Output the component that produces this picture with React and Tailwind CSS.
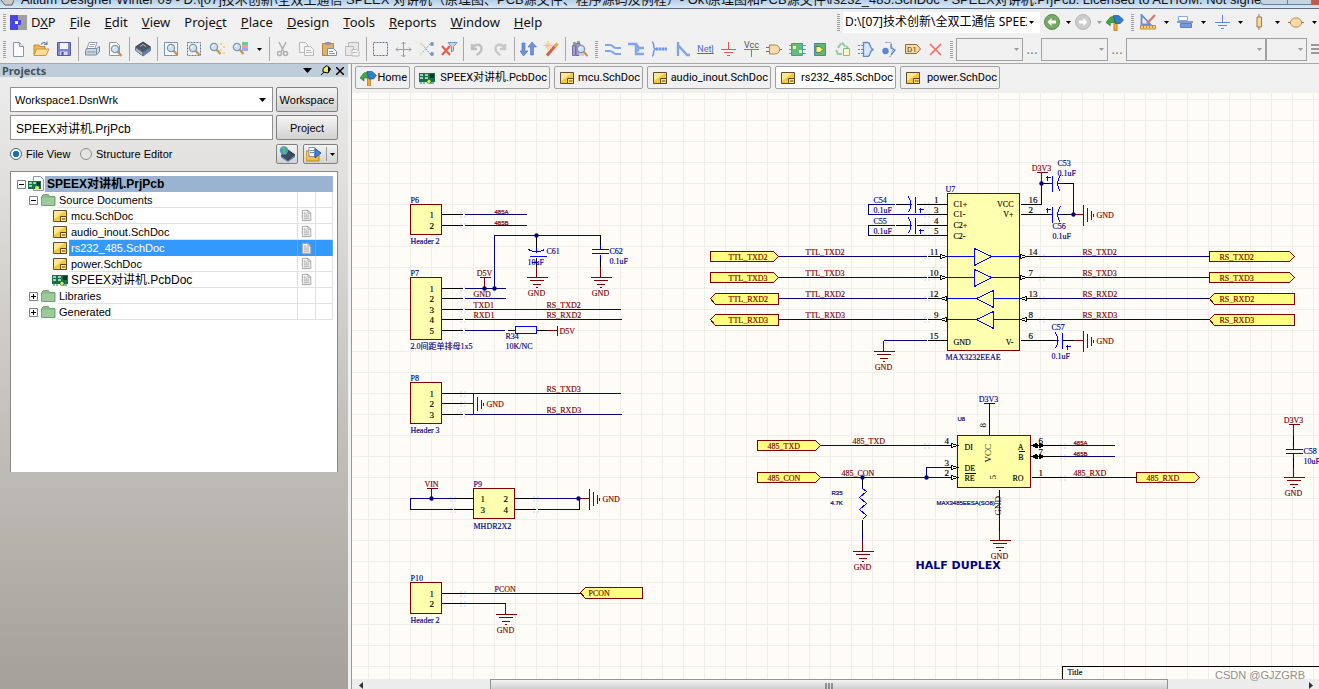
import React from "react";

const RED = "#800000";
const NAVY = "#000080";
const BLUE = "#0000ff";
const BLACK = "#000000";

/* ---------- toolbar icons, 16 x 16 ---------- */

const Lens = ({ x = 7, y = 7 }) => (
  <g>
    <path d={`M${x + 2} ${y + 2}l4.5 5`} stroke="#c98f50" strokeWidth="2.2" />
    <circle cx={x} cy={y} r="3.6" fill="#cfe3f5" stroke="#8296ab" strokeWidth="1.3" />
    <path d={`M${x - 2} ${y}a2 2 0 0 1 2-2`} stroke="#fff" fill="none" />
  </g>
);

const icons = {
  newDoc: (
    <g>
      <path d="M3.5 1.5h6l4 4v10h-10z" fill="#f8fbff" stroke="#8a97a8" />
      <path d="M9.5 1.5v4h4" fill="#dbe5f0" stroke="#8a97a8" />
    </g>
  ),
  open: (
    <g>
      <path d="M1 4h5l1 1.5h5V14H1z" fill="#e9b75c" stroke="#c48a33" />
      <path d="M3.500 8H16l-3 6.500H1z" fill="#fddd92" stroke="#c99744" />
      <path d="M8 3.500c2-2.500 4-2.500 5.500-.5M14 .5v3h-3" fill="none" stroke="#74869c" strokeWidth="1.200" />
    </g>
  ),
  save: (
    <g>
      <path d="M1.500 1.500h13v13h-13z" fill="#7f83d4" stroke="#5458ad" />
      <path d="M4 2h8v6H4z" fill="#f3f4ff" />
      <path d="M4 10.500h7.500V14H4z" fill="#d5d8f5" />
      <path d="M5.500 11h2v3h-2z" fill="#43479a" />
    </g>
  ),
  print: (
    <g>
      <path d="M5 1.500h8l-2 6H3z" fill="#fff" stroke="#8ba0b5" />
      <path d="M2.500 7.500h10l3-2v5l-3 3.500h-11v-4z" fill="#cdd7e3" stroke="#76889c" />
      <path d="M3 11h8.500M12.500 8v5.500" stroke="#7d91a8" fill="none" />
      <path d="M6 3.500h5M5 5.500h5" stroke="#9bb0c8" />
    </g>
  ),
  preview: (
    <g>
      <path d="M2.500 1.500h7l3 3v10h-10z" fill="#fff" stroke="#8a97a8" />
      <Lens x={8} y={8} />
    </g>
  ),
  chip: (
    <g>
      <path d="M8 1l7.500 5L8 11.500.5 6z" fill="#4c5a68" stroke="#303c48" />
      <path d="M.5 6.500v3L8 15v-3.500z" fill="#a9b8c6" stroke="#6c7b89" />
      <path d="M15.500 6.500v3L8 15v-3.500z" fill="#5c84b2" stroke="#5b7593" />
      <path d="M5 5.500l3-2 3 2" stroke="#a6b5c2" fill="none" />
    </g>
  ),
  zoomDoc: (
    <g>
      <path d="M1.500 1.500h13v13h-13z" fill="#f5f9fe" stroke="#7b96b8" />
      <Lens x={8} y={7} />
    </g>
  ),
  zoomArea: (
    <g>
      <path d="M1.500 1.500h13v13h-13z" fill="none" stroke="#5a76a5" strokeDasharray="2 1" />
      <Lens x={7} y={7} />
    </g>
  ),
  zoomPoint: (
    <g>
      <Lens x={5} y={6} />
      <path d="M11 2h2v2h-2zM14 5h2v2h-2zM11 8h2v2h-2zM14 11h2v2h-2z" fill="#e6da76" />
    </g>
  ),
  zoomSel: (
    <g>
      <Lens x={5} y={6} />
      <path d="M10 1h6v3h-6z" fill="#7bc78b" />
      <path d="M10 4h6v3h-6z" fill="#ee9fa3" />
      <path d="M10 7h6v3h-6z" fill="#9fa8ee" />
    </g>
  ),
  cut: (
    <g stroke="#b0b0b0" fill="none" strokeWidth="1.500">
      <path d="M4 1l5 10M11 1L6 11" />
      <circle cx="4.500" cy="12.500" r="2" />
      <circle cx="10.500" cy="12.500" r="2" />
    </g>
  ),
  copy: (
    <g fill="#f4f4f4" stroke="#bababa">
      <path d="M1.500 1.500h6l2 2v8h-8z" />
      <path d="M6.500 5.500h6l3 3v6h-9z" />
      <path d="M8 9.500h5M8 11.500h6" />
    </g>
  ),
  paste: (
    <g>
      <path d="M1.500 2.500h11v12h-11z" fill="#e2b25e" stroke="#b58332" />
      <path d="M4.500 1h5v3h-5z" fill="#8c98a8" />
      <path d="M6.500 7.500h6l3 3v4h-9z" fill="#fff" stroke="#7c8da6" />
      <path d="M8 10.500h4M8 12.500h6" stroke="#8ba0c0" />
    </g>
  ),
  pasteArray: (
    <g fill="#e8e8e8" stroke="#b8b8b8">
      <path d="M4.500 1.500h10v9h-10z" />
      <path d="M1.500 5.500h8v9h-8z" />
      <path d="M8 8.500h5l2 2v4.500H8z" fill="#f6f6f6" />
      <path d="M9 11.500h4" />
    </g>
  ),
  select: <path d="M1.500 1.500h14v13h-14z" fill="none" stroke="#5870a0" strokeDasharray="2 1" />,
  move: (
    <g stroke="#9c9c9c" fill="none">
      <path d="M8.500 1v15M1 8.500h15M6.500 3l2-2 2 2M6.500 14l2 2 2-2M3 6.500l-2 2 2 2M14 6.500l2 2-2 2" />
    </g>
  ),
  deselect: (
    <g>
      <path d="M4 3l8 10M12 3L4 12" stroke="#8da0c4" strokeDasharray="2 1" />
      <circle cx="3" cy="3" r="1.700" fill="#ebe7a8" />
      <circle cx="3" cy="13" r="1.700" fill="#ebe7a8" />
      <circle cx="14" cy="3" r="1.900" fill="#7d92c0" />
      <circle cx="14" cy="13" r="1.900" fill="#7d92c0" />
    </g>
  ),
  clear: (
    <g>
      <path d="M7 1.500h9l-3.500 4v4l-2 1.500V5.500z" fill="#c6d7ea" stroke="#7b94b4" />
      <path d="M1 5l8 9M9 5l-8 9" stroke="#e4604c" strokeWidth="2.200" />
    </g>
  ),
  undo: <path d="M3 3v5h5M3.500 7.500C6 2 13 3 12.500 8c-.3 3-2 4.500-5 6" fill="none" stroke="#c0c0c0" strokeWidth="2.500" />,
  redo: <path d="M13 3v5H8M12.500 7.500C10 2 3 3 3.500 8c.3 3 2 4.500 5 6" fill="none" stroke="#c8c8c8" strokeWidth="2.500" />,
  updown: (
    <g fill="#6c93dc" stroke="#4c71ba" strokeWidth=".6">
      <path d="M2 2h3v8h3l-4.500 5L0 10h2z" />
      <path d="M10.500 14h3V6h3L12 1 8 6h2.500z" />
    </g>
  ),
  wand: (
    <g>
      <path d="M12.500 4.500L4 14.500" stroke="#d0614b" strokeWidth="3" />
      <path d="M14.500 2.500l-3 3.500" stroke="#f4a25f" strokeWidth="3" />
      <path d="M5 0v9M.5 4.500h9M2 1.500l6 6M8 1.500l-6 6" stroke="#efc95a" />
    </g>
  ),
  browse: (
    <g>
      <path d="M1.500 4.500h3v10h-3zM5 2.500h4v12H5z" fill="#a99fcd" stroke="#786ca6" />
      <path d="M2 1h3v3H2zM6 0h3v2H6z" fill="#82ac82" />
      <path d="M8 7h5v8H8z" fill="#d0cbe4" />
      <Lens x={10} y={8} />
    </g>
  ),
  wire: <path d="M0 4h5c3 0 3 3 6 3h5M0 10h5c3 0 3 3 6 3h5" fill="none" stroke="#80a5e8" strokeWidth="2.200" />,
  bus: <path d="M0 3h8v10h8M8 3l3 4h5M8 8l3 2" fill="none" stroke="#80a5e8" strokeWidth="2.400" />,
  harness: (
    <g fill="none" stroke="#6e97e4">
      <path d="M1 1c3 0 0 7 4 7-4 0-1 7-4 7" strokeWidth="1.500" />
      <path d="M5 8h11" strokeWidth="3" strokeDasharray="2.500 .5" />
    </g>
  ),
  entry: <path d="M4 1v14M4 4l9 10h3" fill="none" stroke="#82a4e5" strokeWidth="2.400" />,
  gnd: (
    <g stroke="#e4564c" fill="none">
      <path d="M8.500 1v7M1 8.500h15M4 11.500h9M7 14.500h3" />
    </g>
  ),
  gate: (
    <g>
      <path d="M0 6.500h4M0 10.500h4M12 8.500h4" stroke="#7c6f58" />
      <path d="M3.500 4h5c7 0 7 9 0 9h-5z" fill="#f8dcae" stroke="#a78450" />
    </g>
  ),
  sheet: (
    <g>
      <path d="M0 4.500h3M0 8.500h3M0 12.500h3M14 4.500h3M14 8.500h3M14 12.500h3" stroke="#6f93c4" />
      <path d="M2.500 2.500h11v12h-11z" fill="#62ba7c" stroke="#4696b0" />
      <path d="M4 5h3v3H4zM10 9h3v3h-3z" fill="#fff17d" />
    </g>
  ),
  entryBox: (
    <g>
      <path d="M2.500 2.500h11v12h-11z" fill="#5fb67b" stroke="#4b83b0" />
      <path d="M4 5.500h4l3 3-3 3H4z" fill="#fff07a" stroke="#6b7740" />
    </g>
  ),
  device: (
    <g>
      <path d="M7 1.500l3 4M6 2.500L3 7M1 9l2 4h4M11 5l2 2" stroke="#8fcb9d" strokeWidth="2" fill="none" />
      <path d="M8.500 7.500h6v7h-6z" fill="#fff9c4" stroke="#7ebc8d" />
    </g>
  ),
  harnessBox: (
    <g>
      <path d="M5.500 1.500h4c4 0 1 6 6 7-5 1-2 7-6 7h-4z" fill="#d8e6fa" stroke="#628acb" strokeWidth="1.300" />
      <path d="M0 4.500h6M0 8.500h6M0 12.500h6" stroke="#628acb" strokeDasharray="2 1" />
    </g>
  ),
  harnessEntry: (
    <g>
      <path d="M4.500 1.500h4c4 0 0 6 5 7-5 1-1 7-5 7" fill="none" stroke="#628acb" strokeDasharray="2 1" />
      <path d="M10 3v4l4 2-4 5" fill="none" stroke="#628acb" strokeWidth="1.300" />
      <circle cx="4.500" cy="10" r="3.200" fill="#5b86d8" />
    </g>
  ),
  cross: <path d="M3 3l11 11M14 3L3 14" stroke="#f06a60" strokeWidth="1.600" />,
  back: (
    <g>
      <circle cx="8" cy="8" r="7.500" fill="#75a964" stroke="#5a8a4e" />
      <path d="M3.500 8l4-4v2.500H12v3H7.500V12z" fill="#fff" />
    </g>
  ),
  forward: (
    <g>
      <circle cx="8" cy="8" r="7.500" fill="#cccccc" stroke="#b7b7b7" />
      <path d="M12.500 8l-4-4v2.500H4v3h4.500V12z" fill="#fff" />
    </g>
  ),
  home: (
    <g>
      <path d="M7.500 7h3v9h-3z" fill="#f5a933" stroke="#a36518" strokeWidth=".6" />
      <path d="M0 8l4-5 4-1v6H4v3z" fill="#42a846" stroke="#207025" strokeWidth=".6" />
      <path d="M7 1.500h5l4.500 4-3 3.500H9z" fill="#2f7fd0" stroke="#18457c" strokeWidth=".6" />
    </g>
  ),
  ruler: (
    <g>
      <path d="M1.500 1v9.500h9z" fill="none" stroke="#6a8cd0" strokeWidth="1.800" />
      <path d="M15 1L7 9.500" stroke="#cc7e73" strokeWidth="2.400" />
      <path d="M.5 11.500h15v3.500H.5z" fill="#f6cf86" stroke="#bb8c3e" />
      <path d="M3.500 12v2M6.500 12v2M9.500 12v2M12.500 12v2" stroke="#bb8c3e" />
    </g>
  ),
  align: (
    <g>
      <path d="M1.500 2.500h9v4h-9z" fill="#fff" stroke="#8ba8d8" />
      <path d="M0 8h16" stroke="#5c80c0" strokeWidth="1.500" />
      <path d="M3.500 9.500h11v4h-11z" fill="#7799dc" stroke="#5c80c0" />
    </g>
  ),
  gndBlue: <path d="M8.500 1v7M1 8.500h15M4 11.500h9M7 14.500h3" stroke="#5c87dc" fill="none" />,
  resistor: (
    <g>
      <path d="M8 0v16" stroke="#86764e" />
      <path d="M6 3h4.500v10H6z" fill="#f8d9a0" stroke="#9c7d42" />
    </g>
  ),
  node: (
    <g>
      <path d="M0 8.500h16" stroke="#8b7b62" />
      <path d="M5.500 4h5l3 3v3l-3 3h-5l-3-3V7z" fill="#fbd9a4" stroke="#b58c4c" />
    </g>
  ),
  sch: (
    <g>
      <path d="M1.500 2.500h13v11h-13z" fill="#f9c838" stroke="#5b5037" />
      <path d="M2 3h11L2 11z" fill="#fde78f" />
      <path d="M8.500 8.500h6v5h-6z" fill="#ffe27a" stroke="#5b4816" />
      <path d="M10 11h3.500" stroke="#5b4816" />
    </g>
  ),
  pcb: (
    <g>
      <path d="M0 3h16v9H0z" fill="#18714d" />
      <path d="M1 4h3v2H1zM1 7h3v2H1zM6 4h3v2H6zM6 7h3v2H6z" fill="#a1d0af" />
      <path d="M11 4h4v4h-4z" fill="#0d3825" />
      <circle cx="10" cy="11.500" r="2" fill="#dff05a" stroke="#1b5f20" strokeWidth=".6" />
      <path d="M2 12v2M5 12v2M12 12v2M14 12v2" stroke="#18714d" />
    </g>
  ),
  project: (
    <g>
      <path d="M5.500.5h7l3 3v11h-10z" fill="#fff" stroke="#8e9bac" />
      <path d="M0 5h13v8H0z" fill="#18714d" />
      <path d="M1 6h3v2H1zM1 9h3v2H1zM5 6h3v2H5z" fill="#a1d0af" />
      <path d="M9 6h3v4H9z" fill="#0d3825" />
      <circle cx="9" cy="12" r="2" fill="#dff05a" />
    </g>
  ),
  folder: (
    <g>
      <path d="M1.500 4.500l2-2h5l1 2h5.500v9h-13.500z" fill="#88bd87" stroke="#70a571" />
      <path d="M2 6h12v7H2z" fill="#9ecb9b" />
    </g>
  ),
  page: (
    <g>
      <path d="M3.500 2.500h6l3 3v8h-9z" fill="#fafafa" stroke="#a0a0a0" />
      <path d="M9.500 2.500v3h3M5 5.500h3M5 7.500h6M5 9.500h6M5 11.500h6" stroke="#a0a0a0" fill="none" />
    </g>
  ),
  folderArrow: (
    <g>
      <path d="M0 5h5l1 2h7v8H0z" fill="#f3bf49" stroke="#b98622" />
      <path d="M3 1.500h6v9H3z" fill="#fff" stroke="#8b99b0" />
      <path d="M4 4.500h4M4 6.500h4" stroke="#6d87b5" />
      <path d="M9 2.500l6 4.500-6 5z" fill="#4382d8" stroke="#2559a4" />
    </g>
  ),
  chipGlobe: (
    <g>
      <path d="M9 4l7 5-7 5.500-7-5z" fill="#3e4c5a" stroke="#26313c" />
      <path d="M2 9.500v2l7 4.500 7-5v-2l-7 5.500z" fill="#5382b7" />
      <circle cx="5" cy="4.500" r="4.200" fill="#4b94cf" />
      <path d="M2 2c3-2 4 1 3 3s2 2 1 3" stroke="#5ec05d" strokeWidth="2" fill="none" />
    </g>
  ),
};

const Icon = ({ name, className = "h-4 w-[17px]" }) => (
  <svg viewBox="0 0 17 16" className={`shrink-0 ${className}`} fill="none" aria-hidden="true">
    {icons[name]}
  </svg>
);

const Down = ({ color = "#000", className = "h-1 w-[7px]" }) => (
  <svg viewBox="0 0 7 4" preserveAspectRatio="none" className={`shrink-0 ${className}`} aria-hidden="true">
    <path d="M0 0h7L3.500 4z" fill={color} />
  </svg>
);

const Grip = ({ className = "mx-[3px]" }) => (
  <svg viewBox="0 0 3 17" className={`h-[17px] w-[3px] shrink-0 ${className}`} aria-hidden="true">
    <path d="M1.500 0v17" stroke="#a0a0a0" strokeWidth="3" strokeDasharray="1 1" />
  </svg>
);

const Sep = () => (
  <span className="flex h-6 w-[5px] shrink-0 justify-center">
    <span className="w-px bg-[#a6a6a6]" />
  </span>
);

const Tool = ({ name, label }) => (
  <button type="button" aria-label={label || name} className="flex h-6 w-[23px] shrink-0 items-center justify-center">
    <Icon name={name} />
  </button>
);

const MENU = [
  ["D", "X", "P"], ["", "F", "ile"], ["", "E", "dit"], ["", "V", "iew"], ["Proje", "c", "t"],
  ["", "P", "lace"], ["", "D", "esign"], ["", "T", "ools"], ["", "R", "eports"], ["", "W", "indow"], ["", "H", "elp"],
];

function TitleBar() {
  return (
    <header className="flex h-[9px] shrink-0 items-end overflow-hidden border-b border-[#5b6f86] bg-linear-to-b from-[#b4cfe8] to-[#dbe8f3] font-['Liberation_Sans','Noto_Sans_CJK_SC',sans-serif] text-[13px] leading-4">
      <svg viewBox="0 0 14 8" className="h-2 w-[14px] shrink-0" aria-hidden="true">
        <path d="M1 0l4 5h7l2-5" fill="#c9c9c9" stroke="#666" />
      </svg>
      <span className="ml-[7px] min-w-0 flex-1 whitespace-nowrap text-[#111]">
        Altium Designer Winter 09 - D:\[07]技术创新\全双工通信 SPEEX 对讲机（原理图、PCB源文件、程序源码及例程）- Ok\原理图和PCB源文件\rs232_485.SchDoc - SPEEX对讲机.PrjPcb. Licensed to ALTIUM. Not signed in.
      </span>
      <span className="flex h-2 items-start">
        <button type="button" aria-label="Minimize" className="h-[5px] w-7 rounded-bl border border-t-0 border-[#6d7f93] bg-[#c5d4e3]" />
        <button type="button" aria-label="Restore" className="h-[5px] w-6 border-r border-b border-[#6d7f93] bg-[#c5d4e3]" />
        <button type="button" aria-label="Close" className="h-[5px] w-[7px] bg-[#c65a47]" />
      </span>
    </header>
  );
}

function MenuBar() {
  return (
    <div className="flex h-[26px] shrink-0 items-center overflow-hidden">
      <Grip className="ml-[3px]" />
      <svg viewBox="0 0 17 15" className="ml-1 h-[15px] w-[17px] shrink-0" aria-hidden="true">
        <path d="M0 0h8v15H0z" fill="#4848dc" />
        <path d="M8 0h9v15H8z" fill="#a0a0a0" />
        <path d="M7 5h4v5H7z" fill="#4848dc" />
        <path d="M5 6h3v3H5z" fill="#fff" />
      </svg>
      <nav className="flex flex-1 gap-[14px] pl-1 font-['Noto_Sans',sans-serif] text-[13px] leading-5 text-[#111]">
        {MENU.map(([a, b, c]) => (
          <button type="button" key={a + b + c}>{a}<u>{b}</u>{c}</button>
        ))}
      </nav>
      <Grip />
      <div className="flex h-[21px] w-[197px] shrink-0 items-center bg-white pr-1">
        <input aria-label="Document path" defaultValue="D:\[07]技术创新\全双工通信 SPEEX 对讲机" className="w-[184px] bg-transparent pl-[2px] font-['Noto_Sans','Noto_Sans_CJK_SC',sans-serif] text-[12px] leading-5 outline-none" />
        <button type="button" aria-label="Path history" className="flex flex-1 justify-center"><Down className="h-[3px] w-[5px]" /></button>
      </div>
      {["back", "forward"].map((n) => (
        <button type="button" aria-label={n} key={n} className="flex w-[31px] shrink-0 items-center gap-[5px] pl-1">
          <Icon name={n} />
          <Down color={n === "back" ? "#000" : "#999"} className="h-[3px] w-[5px]" />
        </button>
      ))}
      <button type="button" aria-label="Home" className="flex w-[26px] shrink-0 justify-center"><Icon name="home" className="h-[17px] w-[18px]" /></button>
      <Grip />
      <div className="flex w-[182px] shrink-0">
        {["ruler", "align", "gndBlue", "resistor", "node"].map((n) => (
          <button type="button" aria-label={n} key={n} className="flex w-[37px] shrink-0 items-center gap-[7px] pl-[3px]">
            <Icon name={n} />
            <Down className="h-[3px] w-[5px]" />
          </button>
        ))}
      </div>
    </div>
  );
}

const GreySelect = ({ label, className }) => (
  <span className={`relative flex h-[23px] items-center ${className}`}>
    <select aria-label={label} disabled className="h-full w-full appearance-none border border-[#a0a0a0] bg-[#f0f0f0]" />
    <span className="absolute right-1"><Down color="#9a9a9a" className="h-[3px] w-[5px]" /></span>
  </span>
);

function ToolBar() {
  return (
    <div className="flex h-[28px] shrink-0 items-center overflow-hidden">
      <Grip className="mr-px ml-[3px]" />
      <Tool name="newDoc" /><Tool name="open" /><Tool name="save" /><Sep />
      <Tool name="print" /><Tool name="preview" /><Sep />
      <Tool name="chip" /><Sep />
      <Tool name="zoomDoc" /><Tool name="zoomArea" /><Tool name="zoomPoint" /><Tool name="zoomSel" />
      <button type="button" aria-label="More zoom" className="flex w-[15px] shrink-0 justify-center"><Down className="h-[3px] w-[5px]" /></button>
      <Sep />
      <Tool name="cut" /><Tool name="copy" /><Tool name="paste" /><Tool name="pasteArray" /><Sep />
      <Tool name="select" /><Tool name="move" /><Tool name="deselect" /><Tool name="clear" /><Sep />
      <Tool name="undo" /><Tool name="redo" /><Sep />
      <Tool name="updown" /><Tool name="wand" /><Sep />
      <Tool name="browse" /><Grip className="mx-1" />
      <Tool name="wire" /><Tool name="bus" /><Tool name="harness" /><Tool name="entry" />
      <button type="button" className="w-[23px] shrink-0 text-center font-['Roboto',sans-serif] text-[9px] leading-[10px] text-[#4a6cb8] underline">Net]</button>
      <Tool name="gnd" />
      <button type="button" className="flex w-[23px] shrink-0 flex-col items-center font-['Roboto',sans-serif] text-[9px] leading-[8px] text-[#555]">
        Vcc
        <svg viewBox="0 0 15 8" className="h-2 w-[15px]" aria-hidden="true"><path d="M0 .5h15M7.500 0v8" stroke="#e4564c" /></svg>
      </button>
      <Tool name="gate" /><Tool name="sheet" /><Tool name="entryBox" /><Tool name="device" /><Tool name="harnessBox" /><Tool name="harnessEntry" />
      <button type="button" aria-label="Port D1" className="flex w-[23px] shrink-0 justify-center">
        <svg viewBox="0 0 16 10" className="h-[10px] w-4" aria-hidden="true">
          <path d="M.5.5h11l4 4.500-4 4.500H.5z" fill="#fbdba3" stroke="#8c6e3c" />
          <text x="2" y="8" fontSize="8" fill="#4d3c1e" fontFamily="Roboto, sans-serif">D1</text>
        </svg>
      </button>
      <Tool name="cross" /><Grip className="mx-[3px]" />
      <div className="flex min-w-0 flex-1 items-center text-[#777]">
        <GreySelect label="Filter" className="w-[67px] shrink-0" />
        <span className="w-[18px] shrink-0 text-center font-['Liberation_Sans',sans-serif] text-[14px] leading-5">...</span>
        <GreySelect label="Mask" className="w-[67px] shrink-0" />
        <span className="w-[18px] shrink-0 text-center font-['Liberation_Sans',sans-serif] text-[14px] leading-5">...</span>
        <GreySelect label="Font" className="w-[140px] shrink-0" />
        <GreySelect label="Size" className="w-[41px] shrink-0" />
        <svg viewBox="0 0 8 10" className="ml-1 h-[10px] w-2 shrink-0" aria-hidden="true"><path d="M0 1h8M0 5h8M0 9h8" stroke="#999" strokeWidth="2" /></svg>
      </div>
    </div>
  );
}

/* ---------- projects panel ---------- */

const TREE = [
  { level: 0, open: true, icon: "project", text: "SPEEX对讲机.PrjPcb", size: "text-[12px]" },
  { level: 1, open: true, icon: "folder", text: "Source Documents" },
  { level: 2, icon: "sch", text: "mcu.SchDoc", page: true },
  { level: 2, icon: "sch", text: "audio_inout.SchDoc", page: true },
  { level: 2, icon: "sch", text: "rs232_485.SchDoc", page: true, active: true },
  { level: 2, icon: "sch", text: "power.SchDoc", page: true },
  { level: 2, icon: "pcb", text: "SPEEX对讲机.PcbDoc", page: true, size: "text-[12px]" },
  { level: 1, open: false, icon: "folder", text: "Libraries" },
  { level: 1, open: false, icon: "folder", text: "Generated" },
];

const INDENT = ["pl-[6px]", "pl-[18px]", "pl-[41px]"];

function TreeRow({ level, open, icon, text, page, active, size = "text-[11px]" }) {
  const root = level === 0;
  const tone = root ? "bg-[#9ab3d1] font-bold" : active ? "bg-[#3399ff] text-white" : "border-b border-[#e0e0e0]";
  const cell = active ? "border-[#5aacff]" : "border-[#e0e0e0]";
  return (
    <li className={`flex h-4 items-center ${INDENT[level]}`}>
      {level < 2 && (
        <button type="button" aria-label={open ? "Collapse" : "Expand"} className="mr-[2px] flex h-[9px] w-[9px] shrink-0">
          <svg viewBox="0 0 9 9" className="h-[9px] w-[9px]" aria-hidden="true">
            <path d="M.5.5h8v8h-8z" fill="#fff" stroke="#808080" />
            <path d={open ? "M2 4.500h5" : "M2 4.500h5M4.500 2v5"} stroke="#000" />
          </svg>
        </button>
      )}
      <Icon name={icon} />
      <span className={`flex h-4 min-w-0 flex-1 items-center pl-[2px] whitespace-nowrap ${size} ${tone}`}>
        <span className="flex-1">{text}</span>
        {!root && (
          <>
            <span className={`flex h-4 w-[18px] items-center justify-center border-l ${cell}`}>{page && <Icon name="page" className="h-[15px] w-4" />}</span>
            <span className={`h-4 w-[18px] border-x ${cell}`} />
          </>
        )}
      </span>
    </li>
  );
}

const panelButton = "border border-[#808080] rounded-[2px] bg-linear-to-b from-[#f4f4f4] to-[#d2d2d2] flex items-center justify-center";
const radio = "h-3 w-3 appearance-none rounded-full border border-[#8e8f8f] bg-[#e4e4e4] checked:border-[#4b6a86] checked:bg-[radial-gradient(circle,#1c6fae_40%,#f0f6fa_50%)]";

function ProjectsPanel() {
  return (
    <aside className="flex w-[348px] shrink-0 flex-col bg-linear-to-b from-[#eeeeee] to-[#a5a099] font-['Liberation_Sans','Noto_Sans_CJK_SC',sans-serif] text-[11px] leading-4 text-black">
      <div className="flex h-[13px] shrink-0 items-center bg-[#bfcddb] pr-1 pl-[2px]">
        <h2 className="flex-1 font-['Noto_Sans',sans-serif] text-[11px] leading-[13px] font-bold text-[#44525f]">Projects</h2>
        <button type="button" aria-label="Panel menu" className="mr-2"><Down className="h-[5px] w-[9px]" /></button>
        <button type="button" aria-label="Pin panel" className="mr-[5px]">
          <svg viewBox="0 0 11 11" className="h-[11px] w-[11px]" aria-hidden="true">
            <path d="M1 10l3-3" stroke="#000" />
            <path d="M3 3.500l4-3 3.500 3.500-2.500 4-5-1z" fill="#f4e84a" stroke="#000" />
            <path d="M8 1l2.500 3-2.500 4" fill="#000" />
            <path d="M5 5l2-2" stroke="#fff" />
          </svg>
        </button>
        <button type="button" aria-label="Close panel">
          <svg viewBox="0 0 8 8" className="h-2 w-2" aria-hidden="true"><path d="M0 0l8 8M8 0L0 8" stroke="#000" strokeWidth="1.500" /></svg>
        </button>
      </div>
      <div className="flex flex-col px-[10px] pt-[10px]">
        <div className="flex gap-[3px]">
          <div className="relative flex h-[25px] flex-1 items-center">
            <select aria-label="Workspace" className="h-full w-full appearance-none border border-[#909090] bg-white pl-1 outline-none">
              <option>Workspace1.DsnWrk</option>
            </select>
            <span className="absolute right-[7px]"><Down /></span>
          </div>
          <button type="button" className={`${panelButton} w-[62px]`}>Workspace</button>
        </div>
        <div className="mt-[3px] flex gap-[3px]">
          <input aria-label="Project file" defaultValue="SPEEX对讲机.PrjPcb" className="h-[25px] min-w-0 flex-1 border border-[#909090] bg-white pl-[5px] text-[12px] outline-none" />
          <button type="button" className={`${panelButton} w-[62px]`}>Project</button>
        </div>
        <div className="mt-1 flex h-5 items-center">
          <label className="flex w-[70px] items-center gap-1 whitespace-nowrap"><input type="radio" name="view" defaultChecked className={radio} />File View</label>
          <label className="flex flex-1 items-center gap-1 whitespace-nowrap"><input type="radio" name="view" className={radio} />Structure Editor</label>
          <button type="button" aria-label="Compile" className={`${panelButton} mr-[5px] h-5 w-[22px]`}><Icon name="chipGlobe" /></button>
          <button type="button" aria-label="Options" className={`${panelButton} h-5 w-[35px] gap-[3px]`}>
            <Icon name="folderArrow" />
            <span className="h-[14px] w-px bg-[#999]" />
            <Down className="h-[3px] w-[5px]" />
          </button>
        </div>
        <ul className="mt-[7px] h-[301px] border-t border-r border-l border-[#888888] bg-white pt-[4px] pr-1">
          {TREE.map((row) => <TreeRow key={row.text} {...row} />)}
        </ul>
      </div>
    </aside>
  );
}

/* ---------- schematic primitives ---------- */

const W = ({ d, c = NAVY }) => <path d={d} stroke={c} fill="none" />;
const T = ({ x, y, c = RED, s = 8, a = "start", children }) => (
  <text x={x} y={y - 1} fill={c} fontSize={s} textAnchor={a} stroke={c} strokeWidth=".15">{children}</text>
);
const Tiny = ({ x, y, c = NAVY, children }) => (
  <text x={x} y={y - 1} fill={c} fontSize="6" fontFamily="Liberation Sans, sans-serif" stroke={c} strokeWidth=".2">{children}</text>
);
const Dot = ({ x, y }) => <circle cx={x} cy={y} r="2.200" fill={NAVY} shapeRendering="auto" />;
const Spot = ({ x, y }) => (
  <path d={`M${x - 3} ${y - 2}h2M${x + 1} ${y - 2}h2M${x - 3} ${y + 2}h2M${x + 1} ${y + 2}h2`} stroke="#e3ebf6" strokeWidth="2" />
);
const Box = ({ x, y, w, h }) => <path d={`M${x} ${y}h${w}v${h}h${-w}z`} fill="#ffffb0" stroke={RED} />;

const GndDown = ({ x, y }) => (
  <g>
    <W c={RED} d={`M${x - 10} ${y}h21M${x - 7} ${y + 3}h14M${x - 4} ${y + 7}h8M${x - 1} ${y + 10}h2`} />
    <T x={x} y={y + 19} a="middle">GND</T>
  </g>
);
const GndRight = ({ x, y }) => (
  <g>
    <W c={RED} d={`M${x} ${y - 10}v21M${x + 4} ${y - 7}v14M${x + 8} ${y - 4}v9M${x + 10} ${y - 1}v3`} />
    <T x={x + 13} y={y + 4}>GND</T>
  </g>
);
const Power = ({ x, y, h = 11, label, c = RED }) => (
  <g>
    <W c={c} d={`M${x - 5} ${y}h11M${x} ${y}v${h}`} />
    <T x={x} y={y - 1} a="middle" c={c}>{label}</T>
  </g>
);
const Port = ({ x, y, w, left, label, tx }) => (
  <g>
    <path
      d={left ? `M${x} ${y + 5}l5 -5H${x + w}v11H${x + 5}z` : `M${x} ${y}H${x + w - 5}l5 5l-5 5H${x}z`}
      fill="#ffff80" stroke={RED}
    />
    <T x={tx} y={y + 9}>{label}</T>
  </g>
);
const Arrow = ({ x, y, left }) => (
  <path d={left ? `M${x + 6} ${y - 2}v4l-6 -2z` : `M${x} ${y - 2}v4l6 -2z`} fill="#fff" stroke={BLACK} />
);
const Plus = ({ x, y }) => <W c={BLUE} d={`M${x - 2} ${y}h5M${x} ${y - 2}v5`} />;

const Header = ({ x, y, w = 31, h, name, note, pins }) => (
  <g>
    <T x={x} y={y - 1} c={NAVY}>{name}</T>
    <Box x={x} y={y} w={w} h={h} />
    {pins.map((p, i) => (
      <g key={p}>
        <T x={429} y={p + 4} c={BLACK} s={9}>{i + 1}</T>
        <Spot x={462} y={p} />
        <W c={BLACK} d={`M441 ${p}H462`} />
      </g>
    ))}
    <T x={x} y={y + h + 10} c={NAVY}>{note}</T>
  </g>
);

const ROWS = [
  { y: 256, n: "TXD2", l: "11", r: "14" },
  { y: 277, n: "TXD3", l: "10", r: "7" },
  { y: 298, n: "RXD2", l: "12", r: "13", left: true },
  { y: 319, n: "RXD3", l: "9", r: "8", left: true },
];

function LeftConnectors() {
  return (
    <g>
      <Header x={410} y={204} h={30} name="P6" note="Header 2" pins={[214, 225]} />
      <W d="M464 214H526M464 225H526" />
      <Tiny x={494} y={214} c={RED}>485A</Tiny>
      <Tiny x={494} y={225} c={RED}>485B</Tiny>

      <Header x={410} y={277} h={62} name="P7" note="2.0间距单排母1x5" pins={[288, 298, 309, 319, 330]} />
      <W d="M464 288H505M464 298H505M464 309H620M464 319H621M464 330H504M494 288V235H600" />
      <W c={BLACK} d="M507 330H515M536 330H546M536 235V248M536 257V266M600 235V248M600 254V266" />
      <W c={RED} d="M546 330H557M557 325V335M536 266V277M600 266V277" />
      <path d="M515 326h21v7h-21z" fill="none" stroke={BLUE} />
      <W c={BLUE} d="M528 249q8 5 16 0M529 256h17M536 247v5M591 249h17M591 253h17M600 244v5M600 254v4M531 262h6" />
      <Power x={484} y={277} label="D5V" />
      <Dot x={484} y={288} /><Dot x={494} y={288} /><Dot x={536} y={235} />
      <GndDown x={536} y={277} /><GndDown x={600} y={277} />
      <T x={546} y={254} c={NAVY}>C61</T><T x={527} y={265} c={NAVY}>10uF</T>
      <T x={609} y={254} c={NAVY}>C62</T><T x={609} y={264} c={NAVY}>0.1uF</T>
      <T x={473} y={297}>GND</T><T x={473} y={308}>TXD1</T><T x={473} y={318}>RXD1</T>
      <T x={546} y={308}>RS_TXD2</T><T x={546} y={318}>RS_RXD2</T>
      <T x={559} y={334}>D5V</T>
      <T x={505} y={339} c={NAVY}>R34</T><T x={505} y={349} c={NAVY}>10K/NC</T>

      <Header x={410} y={382} h={41} name="P8" note="Header 3" pins={[393, 403, 414]} />
      <W d="M462 393H620M464 414H621" />
      <W c={RED} d="M462 403H473" />
      <GndRight x={473} y={403} />
      <T x={546} y={392}>RS_TXD3</T><T x={546} y={413}>RS_RXD3</T>

      <T x={473} y={487} c={NAVY}>P9</T>
      <Box x={473} y={488} w={41} h={30} />
      <Spot x={452} y={498} /><Spot x={452} y={509} /><Spot x={535} y={498} /><Spot x={535} y={509} />
      <T x={480} y={502} c={BLACK} s={9}>1</T><T x={503} y={502} c={BLACK} s={9}>2</T>
      <T x={480} y={513} c={BLACK} s={9}>3</T><T x={503} y={513} c={BLACK} s={9}>4</T>
      <T x={473} y={529} c={NAVY}>MHDR2X2</T>
      <W d="M453 498H410V509H452M535 498H579V509H537" />
      <W c={BLACK} d="M453 498H473M453 509H473M514 498H535M514 509H535" />
      <W c={RED} d="M579 498H589" />
      <Power x={431} y={488} label="VIN" />
      <Dot x={431} y={498} /><Dot x={578} y={498} />
      <GndRight x={589} y={498} />

      <Header x={410} y={582} h={31} name="P10" note="Header 2" pins={[593, 603]} />
      <W d="M462 593H580M462 603H505" />
      <W c={RED} d="M505 603V614" />
      <GndDown x={505} y={614} />
      <T x={494} y={592}>PCON</T>
      <Port x={580} y={587} w={62} left label="PCON" tx={588} />
    </g>
  );
}

function Max3232() {
  return (
    <g>
      <T x={945} y={192} c={NAVY}>U7</T>
      <Box x={947} y={193} w={72} h={157} />
      <T x={945} y={360} c={NAVY}>MAX3232EEAE</T>
      {[["C1+", 207], ["C1-", 217], ["C2+", 228], ["C2-", 239], ["GND", 345]].map(([t, y]) => <T key={t} x={953} y={y} c={BLACK}>{t}</T>)}
      {[["VCC", 207], ["V+", 217], ["V-", 345]].map(([t, y]) => <T key={t} x={1013} y={y} c={BLACK} a="end">{t}</T>)}
      {[["1", 203], ["3", 213], ["4", 224], ["5", 234], ["15", 339]].map(([t, y]) => <T key={t} x={938} y={y} c={BLACK} s={9} a="end">{t}</T>)}
      {[["16", 203], ["2", 213], ["6", 339]].map(([t, y]) => <T key={t} x={1028} y={y} c={BLACK} s={9}>{t}</T>)}

      {[204, 225].map((y, i) => (
        <g key={y}>
          <Spot x={926} y={y} /><Spot x={926} y={y + 10} />
          <W d={`M894 ${y}H868V${y + 10}H927`} />
          <W c={BLACK} d={`M895 ${y}H907M916 ${y}H947M927 ${y + 10}H947`} />
          <W c={BLUE} d={`M907 ${y}H911M908 ${y - 8}q5 8 0 16M915 ${y - 8}v16`} />
          <Plus x={920} y={y + 5} />
          <T x={873} y={y - 1} c={NAVY}>{i ? "C55" : "C54"}</T>
          <T x={873} y={y + 9} c={NAVY}>0.1uF</T>
        </g>
      ))}

      {ROWS.map(({ y, n, l, r, left }) => (
        <g key={n}>
          <Spot x={926} y={y} /><Spot x={1041} y={y} />
          <Port x={710} y={y - 5} w={68} left={left} label={`TTL_${n}`} tx={728} />
          <Port x={1209} y={y - 5} w={85} left={left} label={`RS_${n}`} tx={1219} />
          <W d={`M778 ${y}H926M1041 ${y}H1209`} />
          <W c={BLACK} d={`M927 ${y}H947M1020 ${y}H1041`} />
          <T x={805} y={y - 1}>{`TTL_${n}`}</T>
          <T x={1082} y={y - 1}>{`RS_${n}`}</T>
          <T x={938} y={y - 1} c={BLACK} s={9} a="end">{l}</T>
          <T x={1028} y={y - 1} c={BLACK} s={9}>{r}</T>
          <Arrow x={940} y={y} left={left} /><Arrow x={1020} y={y} left={left} />
          <W c={BLUE} d={left ? `M947 ${y}H976M993 ${y}H1019M993 ${y - 8}v17l-17 -9z` : `M947 ${y}H974M992 ${y}H1019M974 ${y - 8}v17l17 -9z`} />
        </g>
      ))}

      <Spot x={883} y={340} />
      <W d="M883 340H926" />
      <W c={BLACK} d="M927 340H947" />
      <W c={RED} d="M883 340V351" />
      <GndDown x={883} y={351} />

      <W c={BLACK} d="M1020 204H1041M1041 183H1052M1062 183H1073M1020 214H1052M1058 214H1073M1020 340H1054M1062 340H1073" />
      <W d="M1041 183V204M1073 183V214" />
      <W c={RED} d="M1073 214H1083M1073 340H1083" />
      <W c={BLUE} d="M1048 183H1052M1052 175v16M1060 175q-6 8 0 16M1056 183h6M1048 214H1052M1052 206v16M1060 206q-6 8 0 16M1056 214h4M1054 340h4M1055 332q5 8 0 16M1062 332v16" />
      <Plus x={1047} y={177} /><Plus x={1047} y={209} /><Plus x={1067} y={346} />
      <Power x={1041} y={172} label="D3V3" />
      <Dot x={1041} y={183} /><Dot x={1073} y={214} />
      <GndRight x={1083} y={214} /><GndRight x={1083} y={340} />
      <T x={1057} y={166} c={NAVY}>C53</T><T x={1057} y={176} c={NAVY}>0.1uF</T>
      <T x={1052} y={229} c={NAVY}>C56</T><T x={1052} y={239} c={NAVY}>0.1uF</T>
      <T x={1051} y={330} c={NAVY}>C57</T><T x={1051} y={359} c={NAVY}>0.1uF</T>
    </g>
  );
}

function Max3485() {
  return (
    <g>
      <Port x={757} y={440} w={63} label="485_TXD" tx={767} />
      <Port x={757} y={472} w={63} label="485_CON" tx={767} />
      <Port x={1136} y={472} w={63} label="485_RXD" tx={1146} />
      <Spot x={926} y={445} /><Spot x={1062} y={445} /><Spot x={1062} y={456} /><Spot x={1062} y={477} />
      <W d="M820 445H937M820 477H947M926 477V467H945M1062 445H1114M1062 456H1114M1062 477H1136M862 519V540M989 403V435M999 489V530" />
      <W c={BLACK} d="M937 445H957M944 477H957M945 467H957M1031 445H1062M1031 456H1062M1031 477H1062M862 477V488M862 519V530" />
      <W c={RED} d="M862 540V551M999 530V540" />
      <W c={BLUE} d="M862 488l4 3l-7 6l7 6l-7 6l7 6l-4 4" />
      <path d="M957 435h73v52h-73z" fill="#ffffa8" stroke={RED} />
      <Arrow x={951} y={445} /><Arrow x={951} y={467} /><Arrow x={951} y={477} />
      {[445, 456].map((y) => <path key={y} d={`M1031 ${y}l5 -2v4zM1037 ${y - 2}v4M1043 ${y}l-4 -2v4z`} fill={BLACK} stroke={BLACK} />)}
      <Dot x={862} y={477} /><Dot x={926} y={477} />
      <GndDown x={862} y={551} /><GndDown x={999} y={540} />
      <T x={852} y={444}>485_TXD</T><T x={841} y={476}>485_CON</T><T x={1073} y={476}>485_RXD</T>
      <T x={944} y={444} c={BLACK} s={9}>4</T><T x={944} y={466} c={BLACK} s={9}>3</T><T x={944} y={476} c={BLACK} s={9}>2</T>
      <T x={1038} y={444} c={BLACK} s={9}>6</T><T x={1038} y={455} c={BLACK} s={9}>7</T><T x={1038} y={476} c={BLACK} s={9}>1</T>
      <T x={964} y={450} c={BLACK}>DI</T><T x={964} y={471} c={BLACK}>DE</T><T x={964} y={481} c={BLACK}>RE</T>
      <T x={1023} y={450} c={BLACK} a="end">A</T><T x={1023} y={460} c={BLACK} a="end">B</T><T x={1023} y={481} c={BLACK} a="end">RO</T>
      <W c={BLACK} d="M964 473h11M1018 451h6" />
      <text transform="translate(990 462) rotate(-90)" fontSize="9">VCC</text>
      <text transform="translate(995 479) rotate(-90)" fontSize="9">5</text>
      <text transform="translate(985 427) rotate(-90)" fontSize="9">8</text>
      <text transform="translate(1000 515) rotate(-90)" fontSize="9">GND</text>
      <W c={NAVY} d="M983 403h11" />
      <T x={988} y={402} c={NAVY} a="middle">D3V3</T>
      <Tiny x={957} y={421}>U8</Tiny>
      <Tiny x={831} y={495}>R35</Tiny><Tiny x={830} y={505}>4.7K</Tiny>
      <Tiny x={936} y={505}>MAX3485EESA(SO8)</Tiny>
      <Tiny x={1073} y={445} c={RED}>485A</Tiny><Tiny x={1073} y={456} c={RED}>485B</Tiny>
      <text x="915" y="568" fill={NAVY} fontSize="11" fontWeight="bold" fontFamily="DejaVu Sans, sans-serif">HALF DUPLEX</text>

      <Power x={1293} y={424} label="D3V3" />
      <W c={BLACK} d="M1293 435V449M1293 453V467" />
      <W c={RED} d="M1293 467V477" />
      <W c={BLUE} d="M1285 449h17M1285 453h17M1293 445v4M1293 453v4" />
      <GndDown x={1293} y={477} />
      <T x={1303} y={454} c={NAVY}>C58</T><T x={1303} y={464} c={NAVY}>10uF</T>
    </g>
  );
}

function Schematic() {
  return (
    <svg className="block h-full w-full" role="img" aria-label="Schematic rs232_485" shapeRendering="crispEdges" fontFamily="'Liberation Serif', 'Noto Sans CJK SC', serif">
      <defs>
        <pattern id="grid" x="368" y="99" width="21" height="21" patternUnits="userSpaceOnUse">
          <path d="M0 0h21v1H1v20H0z" fill="#eeeeea" />
        </pattern>
      </defs>
      <g transform="translate(-352 -93)">
        <rect x="352" y="93" width="4000" height="3000" fill="#fffcf7" />
        <rect x="352" y="93" width="4000" height="3000" fill="url(#grid)" />
      </g>
      <g transform="translate(-351.500 -92.500)">
        <LeftConnectors />
        <Max3232 />
        <Max3485 />
        <W c={BLACK} d="M1062 900V666H4000" />
        <T x={1067} y={675} c={BLACK}>Title</T>
      </g>
    </svg>
  );
}

const TABS = [
  { icon: "home", text: "Home", w: "w-[55px]" },
  { icon: "pcb", text: "SPEEX对讲机.PcbDoc", w: "w-[136px]" },
  { icon: "sch", text: "mcu.SchDoc", w: "w-[89px]" },
  { icon: "sch", text: "audio_inout.SchDoc", w: "w-[124px]" },
  { icon: "sch", text: "rs232_485.SchDoc", w: "w-[121px]", active: true },
  { icon: "sch", text: "power.SchDoc", w: "w-[100px]" },
];

function Editor() {
  return (
    <main className="relative flex min-w-0 flex-1 flex-col border-l border-[#999999] bg-[#f0f0f0]">
      <div className="flex h-[29px] shrink-0 gap-1 pt-[2px] pl-[3px] font-['Roboto','Noto_Sans_CJK_SC',sans-serif] text-[11px] leading-4 text-black">
        {TABS.map((t) => (
          <button type="button" key={t.text} className={`flex h-[23px] items-center justify-between rounded-[2px] border border-[#a0a0a0] pr-[2px] pl-1 whitespace-nowrap ${t.w} ${t.active ? "bg-white" : "bg-[#f0f0f0]"}`}>
            <Icon name={t.icon} />
            {t.text}
          </button>
        ))}
      </div>
      <div className="min-h-0 flex-1 overflow-hidden">
        <Schematic />
      </div>
      <div className="flex h-[10px] shrink-0 justify-between bg-[#ececec]">
        <button type="button" aria-label="Scroll left" className="flex w-[17px] items-end justify-center">
          <svg viewBox="0 0 4 7" className="h-[7px] w-1" aria-hidden="true"><path d="M4 0v7L0 3.500z" fill="#333" /></svg>
        </button>
        <div className="flex flex-1 pr-[134px] pl-[121px]">
          <div className="flex flex-1 justify-center border border-b-0 border-[#8f9494] bg-linear-to-b from-[#f3f3f3] to-[#cfcfcf] pt-[3px]">
            <svg viewBox="0 0 8 6" className="h-[6px] w-2" aria-hidden="true"><path d="M1 0v6M4 0v6M7 0v6" stroke="#444" /></svg>
          </div>
        </div>
        <button type="button" aria-label="Scroll right" className="flex w-[17px] items-end justify-center">
          <svg viewBox="0 0 4 7" className="h-[7px] w-1" aria-hidden="true"><path d="M0 0v7l4-3.500z" fill="#333" /></svg>
        </button>
      </div>
      <span className="absolute right-[14px] bottom-[6px] font-['Liberation_Sans',sans-serif] text-[11px] leading-4 text-[#8e8e8e]">CSDN @GJZGRB</span>
    </main>
  );
}

export default function App() {
  return (
    <div className="flex h-screen flex-col overflow-hidden bg-[#f0f0f0]">
      <TitleBar />
      <MenuBar />
      <ToolBar />
      <div className="h-px shrink-0 bg-[#a8a8a8]" />
      <div className="flex min-h-0 flex-1 gap-[3px]">
        <ProjectsPanel />
        <Editor />
      </div>
    </div>
  );
}
